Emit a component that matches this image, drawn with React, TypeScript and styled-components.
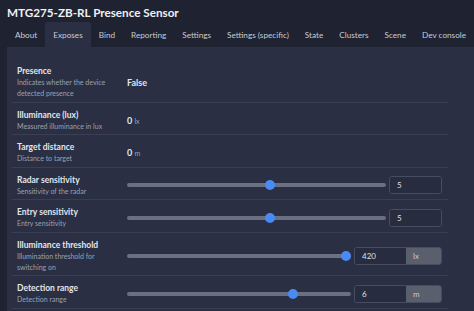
import styled, { createGlobalStyle } from "styled-components";

const GlobalStyle = createGlobalStyle`
  html, body {
    margin: 0;
    padding: 0;
    background: #1e2231;
    font-family: Lato, "Liberation Sans", sans-serif;
    overflow: hidden;
  }
`;

const tabs = [
  "About",
  "Exposes",
  "Bind",
  "Reporting",
  "Settings",
  "Settings (specific)",
  "State",
  "Clusters",
  "Scene",
  "Dev console",
];

type Expose = {
  label: string;
  description: string;
  kind: "text" | "numeric" | "range";
  value: string | number;
  unit?: string;
  min?: number;
  max?: number;
};

const exposes: Expose[] = [
  { label: "Presence", description: "Indicates whether the device detected presence", kind: "text", value: "False" },
  { label: "Illuminance (lux)", description: "Measured illuminance in lux", kind: "numeric", value: 0, unit: "lx" },
  { label: "Target distance", description: "Distance to target", kind: "numeric", value: 0, unit: "m" },
  { label: "Radar sensitivity", description: "Sensitivity of the radar", kind: "range", value: 5, min: 0, max: 9 },
  { label: "Entry sensitivity", description: "Entry sensitivity", kind: "range", value: 5, min: 0, max: 9 },
  { label: "Illuminance threshold", description: "Illumination threshold for switching on", kind: "range", value: 420, min: 0, max: 420, unit: "lx" },
  { label: "Detection range", description: "Detection range", kind: "range", value: 6, min: 0, max: 8, unit: "m" },
];

const Slider = ({ value, min, max }: { value: number; min: number; max: number }) => {
  const pct = (value - min) / (max - min);
  return (
    <Track>
      <Thumb style={{ left: `calc(${pct} * (100% - 10px))` }} />
    </Track>
  );
};

const Control = ({ item }: { item: Expose }) => {
  if (item.kind === "text") return <TextValue>{item.value}</TextValue>;
  if (item.kind === "numeric")
    return (
      <TextValue>
        {item.value} <Unit>{item.unit}</Unit>
      </TextValue>
    );
  return (
    <RangeWrap>
      <Slider value={item.value as number} min={item.min!} max={item.max!} />
      <InputGroup>
        <NumberBox>{item.value}</NumberBox>
        {item.unit && <Addon>{item.unit}</Addon>}
      </InputGroup>
    </RangeWrap>
  );
};

export default function App() {
  return (
    <Page>
      <GlobalStyle />
      <Title>MTG275-ZB-RL Presence Sensor</Title>
      <TabBar>
        {tabs.map((t) => (
          <Tab key={t} $active={t === "Exposes"}>
            {t}
          </Tab>
        ))}
      </TabBar>
      <Card>
        {exposes.map((e) => (
          <Row key={e.label}>
            <LabelCol>
              <Label>{e.label}</Label>
              <Description>{e.description}</Description>
            </LabelCol>
            <Control item={e} />
          </Row>
        ))}
      </Card>
    </Page>
  );
}

const Page = styled.div`
  width: 474px;
  height: 311px;
  padding-left: 7px;
  box-sizing: border-box;
  overflow: hidden;
`;

const Title = styled.h1`
  margin: 0;
  height: 22px;
  line-height: 24px;
  font-size: 11.7px;
  font-weight: 700;
  color: #eef0f5;
  white-space: nowrap;
`;

const TabBar = styled.div`
  display: flex;
  height: 25px;
`;

const Tab = styled.div<{ $active?: boolean }>`
  display: flex;
  align-items: center;
  padding: 0 8px;
  font-size: 8.2px;
  color: #c8cbd5;
  white-space: nowrap;
  background: ${(p) => (p.$active ? "#2a2f43" : "transparent")};
  border-radius: 3px 3px 0 0;
`;

const Card = styled.div`
  width: 467px;
  background: #2a2f43;
  padding: 12px 26px 0 5px;
  height: 264px;
  box-sizing: border-box;
`;

const Row = styled.div`
  display: grid;
  grid-template-columns: 110px minmax(0, 1fr);
  align-items: center;
  padding: 6px 6px 2.5px 5px;
  border-bottom: 1px solid #3a3f54;
`;

const LabelCol = styled.div`
  display: flex;
  flex-direction: column;
  padding-right: 8px;
`;

const Label = styled.div`
  font-size: 8.5px;
  line-height: 12px;
  font-weight: 700;
  color: #e3e5eb;
`;

const Description = styled.div`
  font-size: 7px;
  line-height: 11px;
  color: #9ca1b1;
`;

const TextValue = styled.div`
  font-size: 9px;
  font-weight: 700;
  color: #e3e5eb;
`;

const Unit = styled.span`
  font-size: 7px;
  font-weight: 400;
  color: #9ca1b1;
`;

const RangeWrap = styled.div`
  display: flex;
  align-items: center;
  gap: 3px;
  width: 100%;
`;

const Track = styled.div`
  position: relative;
  flex: 1 1 auto;
  height: 4px;
  border-radius: 2px;
  background: #6b7080;
`;

const Thumb = styled.div`
  position: absolute;
  top: -3px;
  width: 10px;
  height: 10px;
  border-radius: 50%;
  background: #4a8af4;
`;

const InputGroup = styled.div`
  display: flex;
  flex: none;
  height: 18px;
  border: 1px solid #474d60;
  border-radius: 3px;
  overflow: hidden;
  box-sizing: border-box;
`;

const NumberBox = styled.div`
  width: 51px;
  box-sizing: border-box;
  padding-left: 7px;
  display: flex;
  align-items: center;
  font-size: 8px;
  color: #dfe1e8;
  background: #272c3e;
`;

const Addon = styled.div`
  width: 35px;
  box-sizing: border-box;
  padding-left: 7px;
  display: flex;
  align-items: center;
  font-size: 8px;
  color: #c6c9d2;
  background: #5a5f6d;
`;
